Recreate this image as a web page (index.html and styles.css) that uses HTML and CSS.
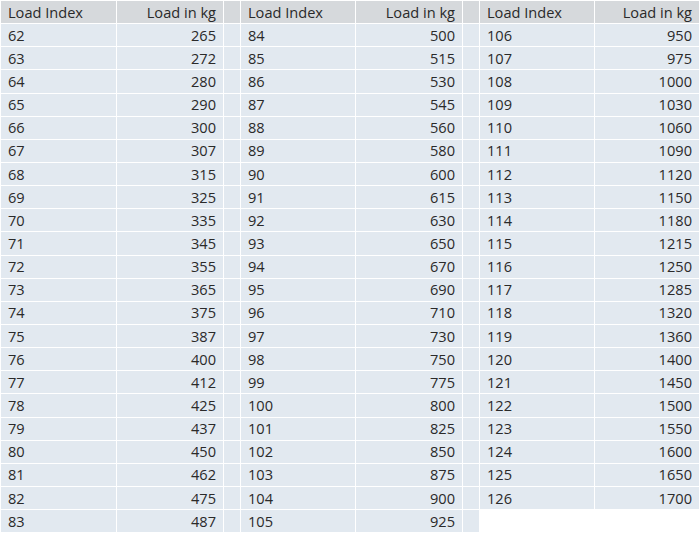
FILE: index.html
```html
<!DOCTYPE html>
<html>
<head>
<meta charset="utf-8">
<link rel="stylesheet" href="styles.css">
</head>
<body>
<table class="load-table">
<colgroup>
<col class="c-idx1"><col class="c-kg1"><col class="c-gap"><col class="c-idx"><col class="c-kg1"><col class="c-gap"><col class="c-idx"><col class="c-kg3">
</colgroup>
<thead>
<tr><th class="idx">Load Index</th><th class="kg">Load in kg</th><th class="gap"></th><th class="idx">Load Index</th><th class="kg">Load in kg</th><th class="gap"></th><th class="idx">Load Index</th><th class="kg">Load in kg</th></tr>
</thead>
<tbody>
<tr><td class="idx">62</td><td class="kg">265</td><td class="gap"></td><td class="idx">84</td><td class="kg">500</td><td class="gap"></td><td class="idx">106</td><td class="kg">950</td></tr>
<tr><td class="idx">63</td><td class="kg">272</td><td class="gap"></td><td class="idx">85</td><td class="kg">515</td><td class="gap"></td><td class="idx">107</td><td class="kg">975</td></tr>
<tr><td class="idx">64</td><td class="kg">280</td><td class="gap"></td><td class="idx">86</td><td class="kg">530</td><td class="gap"></td><td class="idx">108</td><td class="kg">1000</td></tr>
<tr><td class="idx">65</td><td class="kg">290</td><td class="gap"></td><td class="idx">87</td><td class="kg">545</td><td class="gap"></td><td class="idx">109</td><td class="kg">1030</td></tr>
<tr><td class="idx">66</td><td class="kg">300</td><td class="gap"></td><td class="idx">88</td><td class="kg">560</td><td class="gap"></td><td class="idx">110</td><td class="kg">1060</td></tr>
<tr><td class="idx">67</td><td class="kg">307</td><td class="gap"></td><td class="idx">89</td><td class="kg">580</td><td class="gap"></td><td class="idx">111</td><td class="kg">1090</td></tr>
<tr><td class="idx">68</td><td class="kg">315</td><td class="gap"></td><td class="idx">90</td><td class="kg">600</td><td class="gap"></td><td class="idx">112</td><td class="kg">1120</td></tr>
<tr><td class="idx">69</td><td class="kg">325</td><td class="gap"></td><td class="idx">91</td><td class="kg">615</td><td class="gap"></td><td class="idx">113</td><td class="kg">1150</td></tr>
<tr><td class="idx">70</td><td class="kg">335</td><td class="gap"></td><td class="idx">92</td><td class="kg">630</td><td class="gap"></td><td class="idx">114</td><td class="kg">1180</td></tr>
<tr><td class="idx">71</td><td class="kg">345</td><td class="gap"></td><td class="idx">93</td><td class="kg">650</td><td class="gap"></td><td class="idx">115</td><td class="kg">1215</td></tr>
<tr><td class="idx">72</td><td class="kg">355</td><td class="gap"></td><td class="idx">94</td><td class="kg">670</td><td class="gap"></td><td class="idx">116</td><td class="kg">1250</td></tr>
<tr><td class="idx">73</td><td class="kg">365</td><td class="gap"></td><td class="idx">95</td><td class="kg">690</td><td class="gap"></td><td class="idx">117</td><td class="kg">1285</td></tr>
<tr><td class="idx">74</td><td class="kg">375</td><td class="gap"></td><td class="idx">96</td><td class="kg">710</td><td class="gap"></td><td class="idx">118</td><td class="kg">1320</td></tr>
<tr><td class="idx">75</td><td class="kg">387</td><td class="gap"></td><td class="idx">97</td><td class="kg">730</td><td class="gap"></td><td class="idx">119</td><td class="kg">1360</td></tr>
<tr><td class="idx">76</td><td class="kg">400</td><td class="gap"></td><td class="idx">98</td><td class="kg">750</td><td class="gap"></td><td class="idx">120</td><td class="kg">1400</td></tr>
<tr><td class="idx">77</td><td class="kg">412</td><td class="gap"></td><td class="idx">99</td><td class="kg">775</td><td class="gap"></td><td class="idx">121</td><td class="kg">1450</td></tr>
<tr><td class="idx">78</td><td class="kg">425</td><td class="gap"></td><td class="idx">100</td><td class="kg">800</td><td class="gap"></td><td class="idx">122</td><td class="kg">1500</td></tr>
<tr><td class="idx">79</td><td class="kg">437</td><td class="gap"></td><td class="idx">101</td><td class="kg">825</td><td class="gap"></td><td class="idx">123</td><td class="kg">1550</td></tr>
<tr><td class="idx">80</td><td class="kg">450</td><td class="gap"></td><td class="idx">102</td><td class="kg">850</td><td class="gap"></td><td class="idx">124</td><td class="kg">1600</td></tr>
<tr><td class="idx">81</td><td class="kg">462</td><td class="gap"></td><td class="idx">103</td><td class="kg">875</td><td class="gap"></td><td class="idx">125</td><td class="kg">1650</td></tr>
<tr><td class="idx">82</td><td class="kg">475</td><td class="gap"></td><td class="idx">104</td><td class="kg">900</td><td class="gap"></td><td class="idx">126</td><td class="kg">1700</td></tr>
<tr><td class="idx">83</td><td class="kg">487</td><td class="gap"></td><td class="idx">105</td><td class="kg">925</td><td class="gap"></td></tr>
</tbody>
</table>
</body>
</html>
```
FILE: styles.css
```css
html, body {
  margin: 0;
  padding: 0;
  background: #ffffff;
}

.load-table {
  width: 700px;
  border-collapse: separate;
  border-spacing: 1px;
  table-layout: fixed;
  font-family: "Open Sans", "Liberation Sans", sans-serif;
  font-size: 14.6px;
  color: #2a2a2a;
}

.c-idx1 { width: 115px; }
.c-idx { width: 114px; }
.c-kg1 { width: 106px; }
.c-kg3 { width: 104px; }
.c-gap { width: 16px; }

.load-table th,
.load-table td {
  height: 22.15px;
  padding: 0 7px 1px 7px;
  line-height: 20px;
  box-sizing: border-box;
  font-weight: normal;
  white-space: nowrap;
}

.load-table th {
  background: #d6d9dc;
}

.load-table td {
  background: #e2e9f0;
}

.load-table .idx { text-align: left; }
.load-table .kg { text-align: right; }
.load-table .gap { padding: 0; }
```
